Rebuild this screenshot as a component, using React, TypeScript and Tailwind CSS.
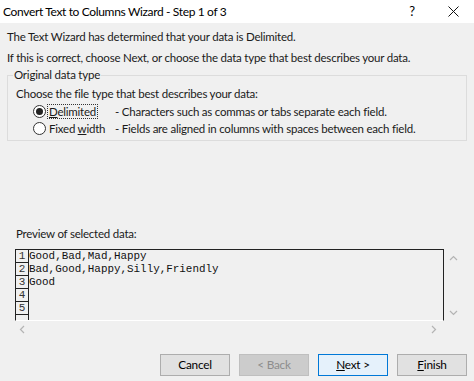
import React from 'react';

const ui = { fontFamily: 'Lato, "Liberation Sans", sans-serif', letterSpacing: '-0.22px' };
const mono = { fontFamily: '"Liberation Mono", "Courier New", monospace', letterSpacing: '0px' };

function Radio({ checked }: { checked?: boolean }) {
  return (
    <span className="w-[13px] h-[13px] rounded-full border border-[#333333] bg-white flex items-center justify-center shrink-0">
      {checked && <span className="w-[7px] h-[7px] rounded-full bg-[#222222]" />}
    </span>
  );
}

function Btn({
  children,
  variant = 'normal',
}: {
  children: React.ReactNode;
  variant?: 'normal' | 'disabled' | 'default';
}) {
  const cls =
    variant === 'disabled'
      ? 'bg-[#cccccc] border-[#bfbfbf] text-[#8c8c8c]'
      : variant === 'default'
      ? 'bg-[#e5f1fb] border-[#0078d7] text-black'
      : 'bg-[#e1e1e1] border-[#adadad] text-black';
  return (
    <div className={`w-[70px] h-[22px] border flex items-center justify-center text-[11.8px] ${cls}`}>
      {children}
    </div>
  );
}

export default function App() {
  const rows = ['Good,Bad,Mad,Happy', 'Bad,Good,Happy,Silly,Friendly', 'Good', '', ''];

  return (
    <div className="w-[474px] h-[381px] bg-[#f0f0f0] overflow-hidden text-[#1a1a1a] whitespace-nowrap" style={ui}>
      {/* Title bar */}
      <div className="h-[23px] bg-white flex items-center pl-[3px] text-[12px] text-black">
        <span className="flex-1 tracking-[-0.35px]">Convert Text to Columns Wizard - Step 1 of 3</span>
        <span className="w-[20px] text-center mr-[26px] text-[13px]">?</span>
        <svg width="11" height="11" viewBox="0 0 11 11" className="mr-[15px]">
          <path d="M0.5 0.5 L10.5 10.5 M10.5 0.5 L0.5 10.5" stroke="#111" strokeWidth="1" />
        </svg>
      </div>

      {/* Body */}
      <div className="pl-[7px] text-[11.5px]">
        <p className="mt-[6px] h-[16px] leading-[16px]">The Text Wizard has determined that your data is Delimited.</p>
        <p className="mt-[5px] h-[16px] leading-[16px]">
          If this is correct, choose Next, or choose the data type that best describes your data.
        </p>

        {/* Group box */}
        <fieldset className="mt-[1px] w-[460px] h-[74px] border border-[#dcdcdc] pl-[8px] pr-0 pt-0 pb-0">
          <legend className="px-[1px] -ml-[3px] h-[16px] leading-[16px]">Original data type</legend>
          <p className="mt-[3px] h-[16px] leading-[16px]">Choose the file type that best describes your data:</p>
          <div className="flex items-center h-[17px] mt-[1px]">
            <div className="w-[30px] flex justify-end">
              <Radio checked />
            </div>
            <span className="ml-[1px] w-[68px]">
              <span className="border border-dotted border-[#333] px-[1px]">
                <span className="underline">D</span>elimited
              </span>
            </span>
            <span>- Characters such as commas or tabs separate each field.</span>
          </div>
          <div className="flex items-center h-[17px]">
            <div className="w-[30px] flex justify-end">
              <Radio />
            </div>
            <span className="ml-[1px] w-[68px] pl-[2px]">
              Fixed <span className="underline">w</span>idth
            </span>
            <span>- Fields are aligned in columns with spaces between each field.</span>
          </div>
        </fieldset>

        <p className="mt-[85px] pl-[9px] h-[16px] leading-[16px]">Preview of selected data:</p>

        {/* Preview */}
        <div className="mt-[7px] ml-[8px] flex">
          <div className="flex flex-col">
            <div className="w-[429px] h-[72px] border-t border-l border-r border-[#222] bg-[#f0f0f0] overflow-hidden border-b border-b-white">
              {rows.concat(['']).map((r, i) => (
                <div key={i} className="flex h-[13px]">
                  <div
                    className="w-[13px] border-r border-b border-[#222] text-[11px] leading-[12px] text-[#333] text-center"
                    style={mono}
                  >
                    {i < 5 ? i + 1 : ''}
                  </div>
                  <div className="text-[10.9px] leading-[13px] text-[#111] whitespace-pre" style={mono}>
                    {r}
                  </div>
                </div>
              ))}
            </div>
            <div className="h-[17px] flex items-center justify-between px-[4px]">
              <svg width="6" height="9" viewBox="0 0 6 9">
                <path d="M5 1 L1.5 4.5 L5 8" stroke="#b4b4b4" strokeWidth="1.2" fill="none" />
              </svg>
              <svg width="6" height="9" viewBox="0 0 6 9" className="mr-[3px]">
                <path d="M1 1 L4.5 4.5 L1 8" stroke="#b4b4b4" strokeWidth="1.2" fill="none" />
              </svg>
            </div>
          </div>
          <div className="w-[18px] h-[72px] flex flex-col items-center justify-between pt-[6px] pb-[5px]">
            <svg width="9" height="6" viewBox="0 0 9 6">
              <path d="M1 5 L4.5 1.5 L8 5" stroke="#b4b4b4" strokeWidth="1.2" fill="none" />
            </svg>
            <svg width="9" height="6" viewBox="0 0 9 6">
              <path d="M1 1 L4.5 4.5 L8 1" stroke="#b4b4b4" strokeWidth="1.2" fill="none" />
            </svg>
          </div>
        </div>

        {/* Buttons */}
        <div className="mt-[16px] flex justify-end gap-[9px] pr-[7px]">
          <Btn>Cancel</Btn>
          <Btn variant="disabled">&lt; Back</Btn>
          <Btn variant="default">
            <span>
              <span className="underline">N</span>ext &gt;
            </span>
          </Btn>
          <Btn>
            <span>
              <span className="underline">F</span>inish
            </span>
          </Btn>
        </div>
      </div>
    </div>
  );
}
